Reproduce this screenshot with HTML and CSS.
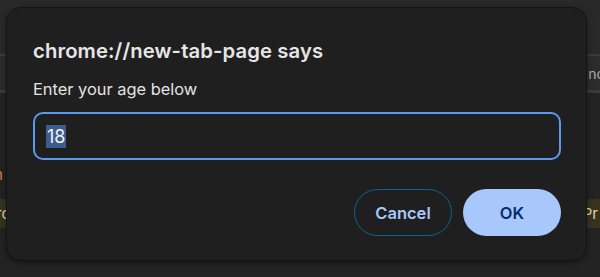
FILE: index.html
```html
<!DOCTYPE html>
<html lang="en">
<head>
    <meta charset="UTF-8">
    <meta name="viewport" content="width=device-width, initial-scale=1.0">
    <title>Prompt</title>
    <link rel="stylesheet" href="styles.css">
</head>
<body>
    <div class="page">
        <div class="band band-top"></div>
        <div class="band band-mid">
            <span></span>
            <span class="side-text">no</span>
        </div>
        <div class="band band-low">
            <div class="line line-orange"><span class="clip-left">n</span></div>
            <div class="line line-hl">
                <span class="clip-left hl">ro</span>
                <span class="hl">Pr</span>
            </div>
        </div>
    </div>

    <div class="dialog">
        <h1 class="dialog-title">chrome://new-tab-page says</h1>
        <p class="dialog-msg">Enter your age below</p>
        <div class="dialog-input"><span class="selected">18</span></div>
        <div class="dialog-buttons">
            <button class="btn btn-cancel">Cancel</button>
            <button class="btn btn-ok">OK</button>
        </div>
    </div>
</body>
</html>
```

FILE: styles.css
```css
* {
    margin: 0;
    padding: 0;
    box-sizing: border-box;
}

body {
    font-family: Inter, "Liberation Sans", sans-serif;
    background-color: #232323;
    color: #e3e3e3;
    width: 600px;
    height: 277px;
    overflow: hidden;
    position: relative;
}

.page {
    display: flex;
    flex-direction: column;
    height: 100%;
}

.band-top {
    height: 56px;
    background-color: #292929;
    border-bottom: 2px solid #3a3a3a;
}

.band-mid {
    height: 37px;
    background-color: #2c2c2c;
    border-bottom: 3px solid #3b3b3b;
    display: flex;
    justify-content: space-between;
    align-items: center;
    font-size: 14px;
    color: #a9a9a9;
}

.side-text {
    margin-right: -5px;
}

.band-low {
    flex: 1;
    display: flex;
    flex-direction: column;
    padding-top: 72px;
    gap: 15px;
    font-size: 15px;
}

.line {
    display: flex;
    justify-content: space-between;
    align-items: center;
}

.clip-left {
    margin-left: -6px;
}

.line-orange {
    color: #d97b4f;
}

.hl {
    background-color: #38331f;
    color: #e3d59c;
    padding: 5px 2px;
}

.dialog {
    position: absolute;
    left: 6px;
    top: 7px;
    width: 581px;
    height: 254px;
    background-color: #1f1f1f;
    border: 1px solid #141414;
    border-radius: 15px;
    padding: 30px 25px 0 26px;
    box-shadow: 0 2px 6px rgba(0, 0, 0, 0.4);
}

.dialog-title {
    font-size: 20.3px;
    font-weight: 600;
    line-height: 25px;
    color: #e6e6e6;
    letter-spacing: 0.1px;
}

.dialog-msg {
    font-size: 16.4px;
    line-height: 20px;
    margin-top: 16px;
}

.dialog-input {
    margin-top: 13px;
    height: 48px;
    border: 2px solid #5a9af0;
    border-radius: 10px;
    padding: 0 11px;
    display: flex;
    align-items: center;
    font-size: 18px;
}

.selected {
    background-color: #3c5d8c;
    color: #f2f2f2;
    padding: 1px 1px;
}

.dialog-buttons {
    display: flex;
    justify-content: flex-end;
    gap: 11px;
    margin-top: 29px;
}

.btn {
    width: 98px;
    height: 47px;
    border-radius: 24px;
    font-family: Inter, "Liberation Sans", sans-serif;
    font-size: 16.5px;
    font-weight: 600;
}

.btn-cancel {
    background: transparent;
    border: 1px solid #0e6390;
    color: #a8c7fa;
}

.btn-ok {
    background-color: #a8c7fa;
    border: none;
    color: #062e6f;
}
```
